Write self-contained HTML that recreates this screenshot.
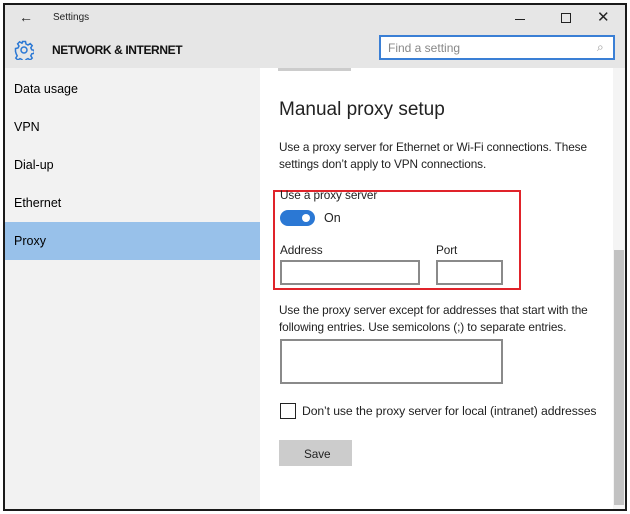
<!DOCTYPE html>
<html><head><style>
body{margin:0;width:630px;height:514px;background:#fff;position:relative;overflow:hidden;font-family:"Liberation Sans",sans-serif;color:#000}
.a{position:absolute}
.win{left:3px;top:3px;width:620px;height:504px;border:2px solid #1a1a1a;background:#e6e6e6;overflow:hidden}
.t{font-size:12.5px;white-space:nowrap}
.c{font-size:11.8px;color:#222;letter-spacing:-0.1px}
.box{border:2px solid #8a8a8a;background:#fff;box-sizing:border-box}
</style></head><body>
<div class="a win">
 <div class="a t" style="left:14px;top:4px;font-size:14px;color:#222">&#8592;</div>
 <div class="a t" style="left:48px;top:7px;font-size:10px;color:#222">Settings</div>
 <div class="a" style="left:510px;top:14px;width:10px;height:1px;background:#222"></div>
 <div class="a" style="left:556px;top:8px;width:8px;height:8px;border:1px solid #222"></div>
 <div class="a t" style="left:592px;top:3px;font-size:15px;color:#222">✕</div>
 <svg class="a" style="left:9px;top:35px" width="20" height="20" viewBox="0 0 20 20"><g fill="none" stroke="#2b78d4" stroke-width="1.5"><circle cx="10" cy="10" r="3"/><path d="M8.5 1.5h3l.5 2.5 2 1 2.2-1.4 2 2-1.4 2.2 1 2 2.5.5v3l-2.5.5-1 2 1.4 2.2-2 2-2.2-1.4-2 1-.5 2.5h-3l-.5-2.5-2-1-2.2 1.4-2-2 1.4-2.2-1-2L1.5 11.5v-3l2.5-.5 1-2L3.6 3.8l2-2L7.8 3.2l.5-.2z"/></g></svg>
 <div class="a t" style="left:47px;top:38px;font-size:12px;font-weight:bold;color:#111;letter-spacing:-0.4px">NETWORK &amp; INTERNET</div>
 <div class="a" style="left:374px;top:30px;width:236px;height:25px;border:2px solid #3a7fd5;background:#fff;box-sizing:border-box"></div>
 <div class="a t" style="left:383px;top:36px;font-size:12px;color:#888">Find a setting</div>
 <div class="a t" style="left:592px;top:35px;font-size:12px;color:#999">⌕</div>
 <div class="a" style="left:0;top:63px;width:255px;height:441px;background:#f2f2f2"></div>
 <div class="a t" style="left:9px;top:77px">Data usage</div>
 <div class="a t" style="left:9px;top:115px">VPN</div>
 <div class="a t" style="left:9px;top:153px">Dial-up</div>
 <div class="a t" style="left:9px;top:191px">Ethernet</div>
 <div class="a" style="left:0;top:217px;width:255px;height:38px;background:#98c1ea"></div>
 <div class="a t" style="left:9px;top:229px">Proxy</div>
 <div class="a" style="left:255px;top:63px;width:353px;height:441px;background:#fff"></div>
 <div class="a" style="left:273px;top:63px;width:73px;height:3px;background:#ccc"></div>
 <div class="a" style="left:608px;top:63px;width:12px;height:441px;background:#f4f4f4"></div>
 <div class="a" style="left:609px;top:245px;width:10px;height:255px;background:#c2c2c2"></div>
 <div class="a t" style="left:274px;top:94px;font-size:19px;color:#222">Manual proxy setup</div>
 <div class="a t c" style="left:274px;top:134px;line-height:17px">Use a proxy server for Ethernet or Wi-Fi connections. These<br>settings don’t apply to VPN connections.</div>
 <div class="a" style="left:268px;top:185px;width:248px;height:100px;border:2px solid #e0232a;box-sizing:border-box"></div>
 <div class="a t c" style="left:275px;top:183px">Use a proxy server</div>
 <div class="a" style="left:275px;top:205px;width:35px;height:16px;border-radius:8px;background:#2b78d4"></div>
 <div class="a" style="left:297px;top:209px;width:8px;height:8px;border-radius:4px;background:#fff"></div>
 <div class="a t" style="left:319px;top:206px;font-size:12.5px;color:#222">On</div>
 <div class="a t c" style="left:275px;top:238px">Address</div>
 <div class="a t c" style="left:431px;top:238px">Port</div>
 <div class="a box" style="left:275px;top:255px;width:140px;height:25px"></div>
 <div class="a box" style="left:431px;top:255px;width:67px;height:25px"></div>
 <div class="a t c" style="left:274px;top:297px;line-height:17px">Use the proxy server except for addresses that start with the<br>following entries. Use semicolons (;) to separate entries.</div>
 <div class="a box" style="left:275px;top:334px;width:223px;height:45px"></div>
 <div class="a" style="left:275px;top:398px;width:16px;height:16px;border:1.5px solid #222;box-sizing:border-box"></div>
 <div class="a t c" style="left:297px;top:399px;font-size:12.2px">Don’t use the proxy server for local (intranet) addresses</div>
 <div class="a" style="left:274px;top:435px;width:73px;height:26px;background:#ccc"></div>
 <div class="a t c" style="left:299px;top:442px">Save</div>
</div>
</body></html>
